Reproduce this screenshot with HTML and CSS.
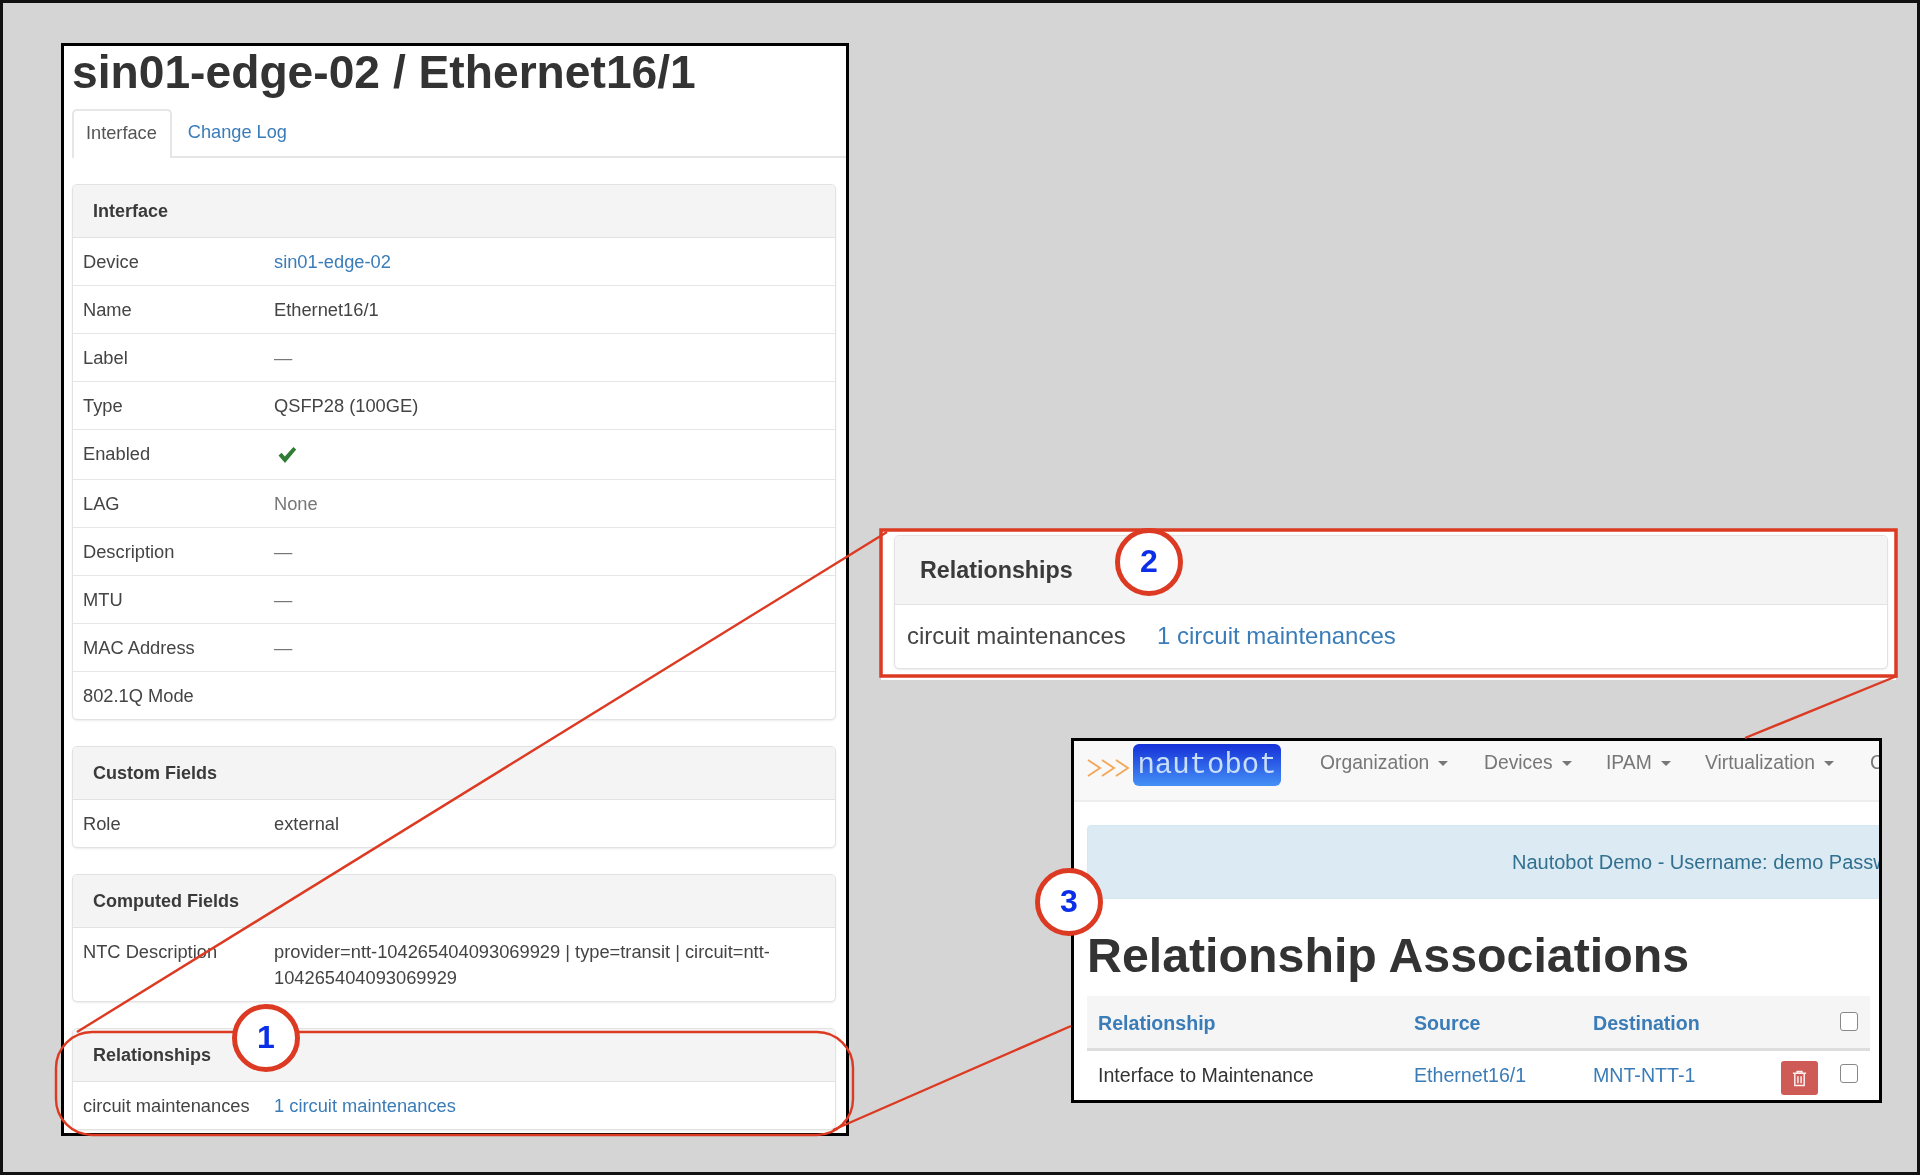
FILE: index.html
```html
<!DOCTYPE html>
<html lang="en">
<head>
<meta charset="utf-8">
<title>Nautobot relationships</title>
<link rel="stylesheet" href="styles.css">
</head>
<body>
<main class="canvas">
  <section class="window window-left">
    <h1 class="page-title">sin01-edge-02 / Ethernet16/1</h1>
    <nav class="tabs">
      <a class="tab tab-active">Interface</a>
      <a class="tab">Change Log</a>
    </nav>
    <div class="panel panel-first">
      <div class="panel-head">Interface</div>
      <div class="row"><span class="key">Device</span><a class="link">sin01-edge-02</a></div>
      <div class="row"><span class="key">Name</span><span>Ethernet16/1</span></div>
      <div class="row"><span class="key">Label</span><span class="muted">—</span></div>
      <div class="row"><span class="key">Type</span><span>QSFP28 (100GE)</span></div>
      <div class="row row-tall"><span class="key">Enabled</span><span><svg class="check" viewBox="0 0 20 18"><path d="M1.5 9.5 L4.6 6.8 L7.8 10.6 L16.4 1 L19.2 3.4 L8 17 Z"/></svg></span></div>
      <div class="row"><span class="key">LAG</span><span class="muted">None</span></div>
      <div class="row"><span class="key">Description</span><span class="muted">—</span></div>
      <div class="row"><span class="key">MTU</span><span class="muted">—</span></div>
      <div class="row"><span class="key">MAC Address</span><span class="muted">—</span></div>
      <div class="row"><span class="key">802.1Q Mode</span><span></span></div>
    </div>
    <div class="panel">
      <div class="panel-head">Custom Fields</div>
      <div class="row"><span class="key">Role</span><span>external</span></div>
    </div>
    <div class="panel">
      <div class="panel-head">Computed Fields</div>
      <div class="row"><span class="key">NTC Description</span><span>provider=ntt-104265404093069929 | type=transit | circuit=ntt-104265404093069929</span></div>
    </div>
    <div class="panel">
      <div class="panel-head">Relationships</div>
      <div class="row"><span class="key">circuit maintenances</span><a class="link">1 circuit maintenances</a></div>
    </div>
  </section>

  <section class="window window-zoom">
    <div class="panel panel-large">
      <div class="panel-head">Relationships</div>
      <div class="row"><span class="key">circuit maintenances</span><a class="link">1 circuit maintenances</a></div>
    </div>
  </section>

  <section class="window window-assoc">
    <header class="navbar">
      <svg class="chevrons" viewBox="0 0 42 18"><path d="M1 1 L13 9 L1 17 M15 1 L27 9 L15 17 M29 1 L41 9 L29 17"/></svg>
      <div class="logo">nautobot</div>
      <ul class="menu">
        <li class="menu-item item-org">Organization<i class="caret"></i></li>
        <li class="menu-item item-dev">Devices<i class="caret"></i></li>
        <li class="menu-item item-ipam">IPAM<i class="caret"></i></li>
        <li class="menu-item item-virt">Virtualization<i class="caret"></i></li>
        <li class="menu-item">Circuits</li>
      </ul>
    </header>
    <div class="alert">Nautobot Demo - Username: demo Password: nautobot</div>
    <h2 class="assoc-title">Relationship Associations</h2>
    <div class="assoc-table">
      <div class="assoc-row assoc-head">
        <a class="link">Relationship</a><a class="link">Source</a><a class="link">Destination</a><span></span><span class="box"></span>
      </div>
      <div class="assoc-row assoc-body">
        <span>Interface to Maintenance</span><a class="link">Ethernet16/1</a><a class="link">MNT-NTT-1</a>
        <span class="trash"><svg viewBox="0 0 16 18"><path d="M1 3.5 H15 M5.5 3.5 V1.5 H10.5 V3.5 M3 3.5 V16.5 H13 V3.5 M6.3 6.5 V14 M9.7 6.5 V14"/></svg></span>
        <span class="box"></span>
      </div>
    </div>
  </section>

  <svg class="callouts" viewBox="0 0 1920 1175">
    <path class="thin" d="M77 1032 L887 532"/>
    <path class="thin" d="M833 1130 L1071 1026"/>
    <path class="thin" d="M1897 676 L1745 738"/>
    <rect class="thin" x="56" y="1032" width="797" height="103" rx="36"/>
    <rect class="frame" x="881" y="530" width="1015" height="146"/>
  </svg>
  <div class="badge badge-1">1</div>
  <div class="badge badge-2">2</div>
  <div class="badge badge-3">3</div>
</main>
</body>
</html>
```
FILE: styles.css
```css
* { box-sizing: border-box; }
html, body { margin: 0; padding: 0; }
body {
  width: 1920px;
  height: 1175px;
  overflow: hidden;
  font-family: "Liberation Sans", Arial, sans-serif;
  color: #444;
}
.canvas {
  position: relative;
  width: 1920px;
  height: 1175px;
  background: #d5d5d5;
  border: 3px solid #111;
  filter: blur(0.4px);
}
.window {
  position: absolute;
  background: #fff;
  overflow: hidden;
}
.window-left {
  left: 58px;
  top: 40px;
  width: 788px;
  height: 1093px;
  border: 3px solid #000;
  padding: 0 10px 0 8px;
}
.window-zoom {
  left: 878px;
  top: 527px;
  width: 1015px;
  height: 150px;
  padding: 5px 8px 0 13px;
}
.window-assoc {
  left: 1068px;
  top: 735px;
  width: 811px;
  height: 365px;
  border: 3px solid #000;
}
.page-title {
  margin: 0 0 11px;
  font-size: 46.2px;
  line-height: 52px;
  font-weight: 700;
  color: #333;
  white-space: nowrap;
}
.tabs {
  display: flex;
  height: 49px;
  margin-right: -10px;
  border-bottom: 2px solid #e6e6e6;
  margin-bottom: 26px;
  font-size: 18.2px;
}
.tab {
  padding: 0 14px 0 16px;
  line-height: 47px;
  color: #3a7cb8;
}
.tab-active {
  height: 49px;
  padding: 0 13px 0 12px;
  line-height: 44px;
  background: #fff;
  color: #555;
  border: 2px solid #e6e6e6;
  border-bottom: 0;
  border-radius: 5px 5px 0 0;
}
.panel {
  margin-bottom: 26px;
  border: 1px solid #e2e2e2;
  border-radius: 5px;
  background: #fff;
  box-shadow: 0 1px 2px rgba(0, 0, 0, 0.08);
  font-size: 18.3px;
  line-height: 26px;
}
.panel-head {
  height: 53px;
  padding: 13px 20px 0;
  background: #f4f4f4;
  font-size: 18px;
  font-weight: 700;
  color: #3a3a3a;
  border-bottom: 1px solid #e2e2e2;
  border-radius: 5px 5px 0 0;
}
.row {
  display: grid;
  grid-template-columns: 191px 1fr;
  padding: 10.5px 28px 10.5px 10px;
  border-top: 1px solid #e6e6e6;
  color: #444;
}
.panel-head + .row { border-top: 0; }
.row-tall { padding-bottom: 12.5px; }
.key { white-space: nowrap; }
.link { color: #3a7cb8; }
.muted { color: #777; }
.check { display: block; width: 20px; height: 18px; margin: 5px 0 0 3px; fill: #2f7d32; }
.panel-large {
  margin: 0;
  font-size: 24px;
  line-height: 30px;
}
.panel-large .panel-head {
  height: 69px;
  padding: 19px 25px 0;
  font-size: 23.3px;
}
.panel-large .row {
  grid-template-columns: 250px 1fr;
  padding: 16px 12px 17px 12px;
}
.navbar {
  position: relative;
  display: flex;
  align-items: flex-start;
  height: 61px;
  background: #f8f8f8;
  border-bottom: 2px solid #eee;
}
.chevrons {
  flex: none;
  width: 42px;
  height: 18px;
  margin: 18px 4px 0 13px;
  fill: none;
  stroke: #f3a95c;
  stroke-width: 2;
}
.logo {
  flex: none;
  width: 148px;
  height: 42px;
  margin-top: 3px;
  border-radius: 6px;
  background: linear-gradient(#1530d8, #4591f6);
  color: #c9def7;
  font-family: "Liberation Mono", monospace;
  font-size: 29px;
  line-height: 43px;
  text-align: center;
}
.menu {
  display: flex;
  flex: none;
  margin: 0 0 0 39px;
  padding: 0;
  list-style: none;
  font-size: 19.3px;
  line-height: 24px;
  color: #777;
  white-space: nowrap;
}
.menu-item { margin-top: 10px; }
.item-org { width: 164px; }
.item-dev { width: 122px; }
.item-ipam { width: 99px; }
.item-virt { width: 165px; }
.caret {
  display: inline-block;
  margin-left: 9px;
  vertical-align: 3px;
  border-top: 5px solid #777;
  border-left: 5px solid transparent;
  border-right: 5px solid transparent;
}
.alert {
  width: 900px;
  height: 74px;
  margin: 23px 0 0 13px;
  padding-left: 424px;
  background: #dceaf4;
  border: 1px solid #d3e8f0;
  border-radius: 4px;
  color: #31708f;
  font-size: 20px;
  line-height: 72px;
  white-space: nowrap;
}
.assoc-title {
  margin: 29px 0 14px 13px;
  font-size: 48.3px;
  line-height: 54px;
  font-weight: 700;
  color: #333;
  white-space: nowrap;
}
.assoc-table {
  width: 783px;
  margin-left: 13px;
  font-size: 19.6px;
}
.assoc-row {
  display: grid;
  grid-template-columns: 316px 179px 180px 70px 18px;
  align-items: center;
  padding-left: 11px;
}
.assoc-head {
  height: 55px;
  padding-top: 2px;
  background: #f5f5f5;
  border-bottom: 3px solid #ddd;
  font-weight: 700;
}
.assoc-body { height: 48px; color: #333; }
.box {
  display: block;
  width: 18px;
  height: 19px;
  margin-top: -4px;
  margin-left: -3px;
  border: 1.5px solid #888;
  border-radius: 3px;
  background: #fff;
}
.trash {
  display: flex;
  align-items: center;
  justify-content: center;
  width: 37px;
  height: 34px;
  margin: 6px 0 0 8px;
  border-radius: 3px;
  background: #cf5b56;
}
.trash svg {
  width: 15px;
  height: 17px;
  fill: none;
  stroke: #fbeeee;
  stroke-width: 1.6;
}
.callouts {
  position: absolute;
  left: -3px;
  top: -3px;
  width: 1920px;
  height: 1175px;
  fill: none;
  pointer-events: none;
}
.thin { stroke: #dc3a22; stroke-width: 2.4; }
.frame { stroke: #dc3a22; stroke-width: 3.5; }
.badge {
  position: absolute;
  width: 68px;
  height: 68px;
  border: 5px solid #dc3a22;
  border-radius: 50%;
  background: #fff;
  color: #0b2fe8;
  font-size: 32px;
  font-weight: 700;
  line-height: 56px;
  text-align: center;
}
.badge-1 { left: 229px; top: 1001px; }
.badge-2 { left: 1112px; top: 525px; }
.badge-3 { left: 1032px; top: 865px; }
```
